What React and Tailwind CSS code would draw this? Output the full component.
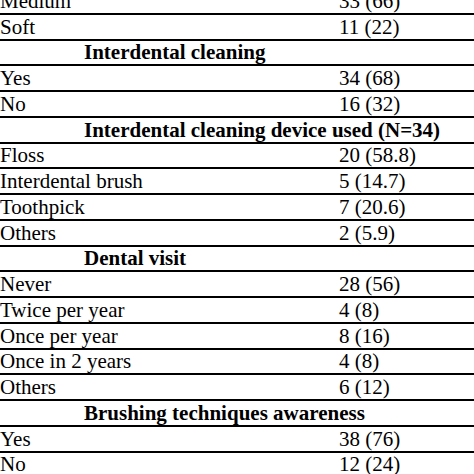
const rows = [
    { label: 'Medium', value: '33 (66)' },
    { label: 'Soft', value: '11 (22)' },
    { header: 'Interdental cleaning' },
    { label: 'Yes', value: '34 (68)' },
    { label: 'No', value: '16 (32)' },
    { header: 'Interdental cleaning device used (N=34)' },
    { label: 'Floss', value: '20 (58.8)' },
    { label: 'Interdental brush', value: '5 (14.7)' },
    { label: 'Toothpick', value: '7 (20.6)' },
    { label: 'Others', value: '2 (5.9)' },
    { header: 'Dental visit' },
    { label: 'Never', value: '28 (56)' },
    { label: 'Twice per year', value: '4 (8)' },
    { label: 'Once per year', value: '8 (16)' },
    { label: 'Once in 2 years', value: '4 (8)' },
    { label: 'Others', value: '6 (12)' },
    { header: 'Brushing techniques awareness' },
    { label: 'Yes', value: '38 (76)' },
    { label: 'No', value: '12 (24)' },
];

export default function App() {
    return (
        <div className="w-[474px] h-[474px] overflow-hidden bg-white text-black font-['Liberation_Serif',serif]">
            <div className="-mt-[11px]">
                {rows.map((row, i) => (
                    <div key={i} className="flex items-end h-[25.76px] border-b-2 border-black text-[21px] leading-[23px]">
                        {row.header ? (
                            <span className="pl-[84px] font-bold">{row.header}</span>
                        ) : (
                            <>
                                <span className="w-[339px] shrink-0">{row.label}</span>
                                <span>{row.value}</span>
                            </>
                        )}
                    </div>
                ))}
            </div>
        </div>
    );
}
